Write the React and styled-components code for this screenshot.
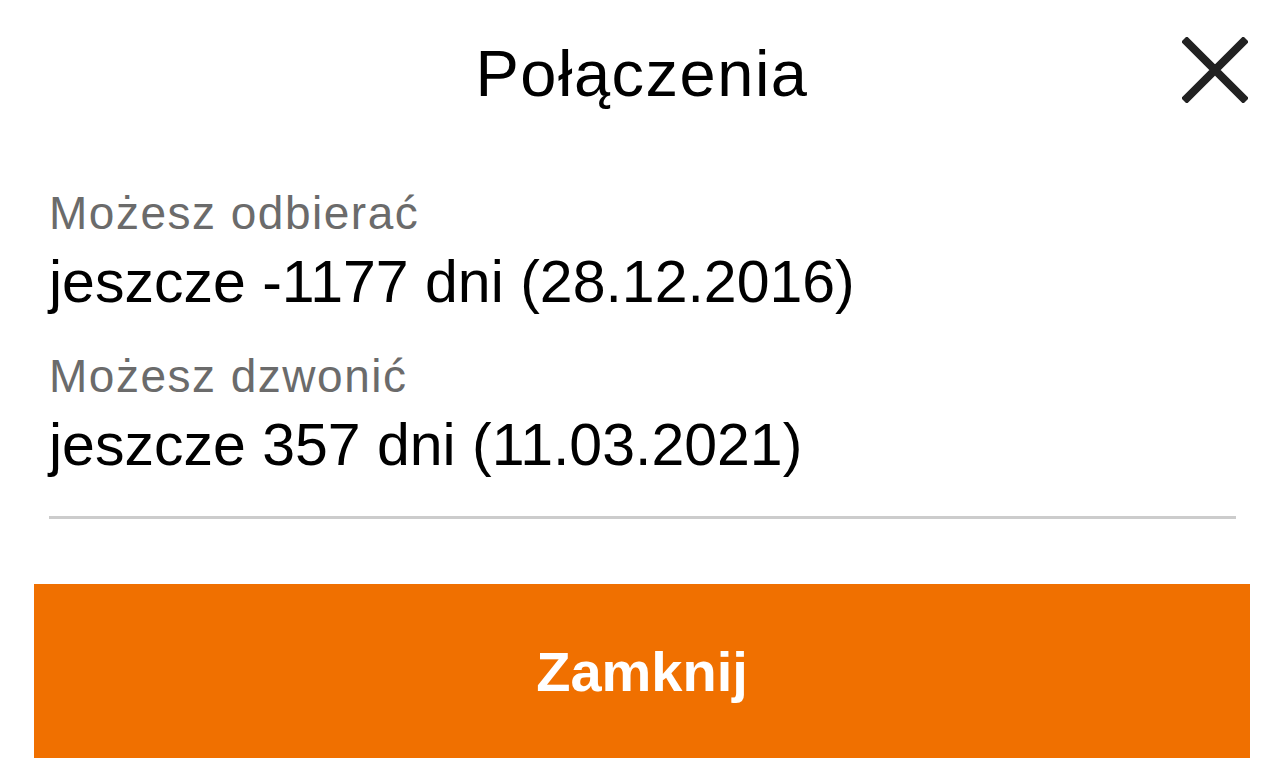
import styled, { createGlobalStyle } from 'styled-components';

const GlobalStyle = createGlobalStyle`
  html, body {
    margin: 0;
    padding: 0;
    background: #ffffff;
  }

  body {
    font-family: "Liberation Sans", Arial, Helvetica, sans-serif;
    -webkit-font-smoothing: antialiased;
  }
`;

const Page = styled.div`
  width: 1287px;
  height: 768px;
  box-sizing: border-box;
  padding: 36px 37px 0 34px;
  display: flex;
  flex-direction: column;
  overflow: hidden;
`;

const Header = styled.header`
  display: grid;
  grid-template-columns: 1fr auto 1fr;
  align-items: start;
`;

const Title = styled.h1`
  grid-column: 2;
  margin: 0;
  padding-top: 3px;
  font-size: 65px;
  line-height: 70px;
  font-weight: 400;
  letter-spacing: 1.5px;
  color: #000000;
`;

const CloseButton = styled.button`
  grid-column: 3;
  justify-self: end;
  width: 72px;
  height: 72px;
  margin: -2px -1px 0 0;
  padding: 0;
  border: none;
  background: transparent;
  display: flex;
  align-items: center;
  justify-content: center;
  cursor: pointer;
`;

const Content = styled.section`
  padding: 79px 14px 0 15px;
  display: flex;
  flex-direction: column;
`;

const Item = styled.div`
  display: flex;
  flex-direction: column;
  gap: 12px;
  margin-bottom: ${({ $last }) => ($last ? '39px' : '37px')};
`;

const Label = styled.span`
  font-size: 46px;
  line-height: 50px;
  letter-spacing: 1.5px;
  color: #6b6b6b;
`;

const Value = styled.span`
  font-size: 59px;
  line-height: 64px;
  color: #000000;
`;

const Divider = styled.hr`
  margin: 0;
  border: none;
  height: 3px;
  background: #cccccc;
`;

const PrimaryButton = styled.button`
  margin-top: 65px;
  height: 174px;
  border: none;
  background: #f07000;
  color: #ffffff;
  font-family: "Liberation Sans", Arial, Helvetica, sans-serif;
  font-size: 56px;
  font-weight: 700;
  cursor: pointer;
`;

const CloseIcon = () => (
  <svg width="66" height="66" viewBox="0 0 66 66" fill="none">
    <path d="M2 2 L64 64 M64 2 L2 64" stroke="#222222" strokeWidth="8" strokeLinecap="butt" />
  </svg>
);

const periods = [
  { label: 'Możesz odbierać', value: 'jeszcze -1177 dni (28.12.2016)' },
  { label: 'Możesz dzwonić', value: 'jeszcze 357 dni (11.03.2021)' },
];

export default function App() {
  return (
    <>
      <GlobalStyle />
      <Page>
        <Header>
          <Title>Połączenia</Title>
          <CloseButton aria-label="Zamknij">
            <CloseIcon />
          </CloseButton>
        </Header>
        <Content>
          {periods.map((p, i) => (
            <Item key={p.label} $last={i === periods.length - 1}>
              <Label>{p.label}</Label>
              <Value>{p.value}</Value>
            </Item>
          ))}
          <Divider />
        </Content>
        <PrimaryButton>Zamknij</PrimaryButton>
      </Page>
    </>
  );
}
